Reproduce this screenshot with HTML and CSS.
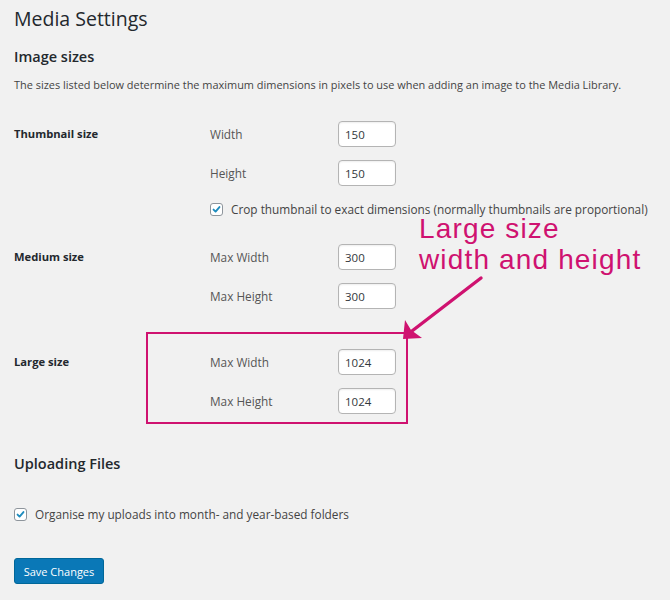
FILE: index.html
```html
<!DOCTYPE html>
<html lang="en">
<head>
<meta charset="utf-8">
<title>Media Settings</title>
<link rel="stylesheet" href="styles.css">
</head>
<body>
<div class="wrap">
  <h1 class="page-title">Media Settings</h1>
  <h2 class="section-title">Image sizes</h2>
  <p class="desc">The sizes listed below determine the maximum dimensions in pixels to use when adding an image to the Media Library.</p>

  <div class="setting setting-thumb">
    <div class="th">Thumbnail size</div>
    <div class="td">
      <div class="field"><label class="field-label">Width</label><input class="num" type="text" value="150"></div>
      <div class="field"><label class="field-label">Height</label><input class="num" type="text" value="150"></div>
      <div class="check-row check-row-crop">
        <span class="cb"><svg viewBox="0 0 13 13" width="13" height="13"><path d="M3 6.6 L5.4 9 L10 3.6" fill="none" stroke="#1e8cbe" stroke-width="2.2" stroke-linecap="round" stroke-linejoin="round"/></svg></span>
        <span class="check-text">Crop thumbnail to exact dimensions (normally thumbnails are proportional)</span>
      </div>
    </div>
  </div>

  <div class="setting setting-medium">
    <div class="th">Medium size</div>
    <div class="td">
      <div class="field"><label class="field-label">Max Width</label><input class="num" type="text" value="300"></div>
      <div class="field"><label class="field-label">Max Height</label><input class="num" type="text" value="300"></div>
    </div>
  </div>

  <div class="setting setting-large">
    <div class="th">Large size</div>
    <div class="td">
      <div class="field"><label class="field-label">Max Width</label><input class="num" type="text" value="1024"></div>
      <div class="field"><label class="field-label">Max Height</label><input class="num" type="text" value="1024"></div>
    </div>
  </div>

  <h2 class="section-title section-upload">Uploading Files</h2>
  <div class="check-row check-row-upload">
    <span class="cb"><svg viewBox="0 0 13 13" width="13" height="13"><path d="M3 6.6 L5.4 9 L10 3.6" fill="none" stroke="#1e8cbe" stroke-width="2.2" stroke-linecap="round" stroke-linejoin="round"/></svg></span>
    <span class="check-text">Organise my uploads into month- and year-based folders</span>
  </div>

  <div class="submit-row"><button class="btn-primary" type="button">Save Changes</button></div>

  <div class="annot-box"></div>
  <div class="annot-text">Large size<br>width and height</div>
  <svg class="annot-arrow" width="670" height="600" viewBox="0 0 670 600">
    <line x1="481" y1="278" x2="412" y2="331" stroke="#cf1270" stroke-width="3.4" stroke-linecap="round"/>
    <polygon points="403,339 405,320 411,330 422,338" fill="#cf1270"/>
  </svg>
</div>
</body>
</html>
```

FILE: styles.css
```css
html, body {
  margin: 0;
  padding: 0;
  background: #f1f1f1;
}
body {
  font-family: "Open Sans", "Noto Sans", sans-serif;
  color: #444;
  font-size: 11px;
}
.wrap {
  position: relative;
  width: 670px;
  height: 600px;
  padding: 0 14px;
  box-sizing: border-box;
  overflow: hidden;
}
.page-title {
  margin: 0;
  padding-top: 6px;
  font-size: 19.5px;
  line-height: 26px;
  font-weight: 400;
  color: #23282d;
}
.section-title {
  margin: 15px 0 0;
  font-size: 14.5px;
  line-height: 20px;
  font-weight: 600;
  color: #23282d;
}
.section-upload { margin-top: 40px; }
.desc {
  margin: 10px 0 0;
  font-size: 10.95px;
  line-height: 16px;
  color: #444;
}
.setting {
  display: grid;
  grid-template-columns: 196px 1fr;
}
.setting-thumb { margin-top: 28px; }
.setting-medium { margin-top: 26px; }
.setting-large { margin-top: 40px; }
.th {
  font-weight: 700;
  color: #23282d;
  line-height: 26px;
  font-size: 11.2px;
}
.td {
  display: flex;
  flex-direction: column;
  gap: 13px;
}
.field {
  display: grid;
  grid-template-columns: 128px 58px;
  align-items: center;
  height: 26px;
}
.field-label {
  color: #555;
  font-size: 11.8px;
}
.num {
  width: 58px;
  height: 26px;
  box-sizing: border-box;
  margin: 0;
  border: 1px solid #b4b4b4;
  border-radius: 4px;
  background: #fff;
  padding: 0 0 0 6px;
  font-family: "Open Sans", "Noto Sans", sans-serif;
  font-size: 11.5px;
  color: #32373c;
  box-shadow: inset 0 1px 2px rgba(0,0,0,0.07);
  outline: none;
}
.check-row {
  display: flex;
  align-items: center;
  height: 18px;
  gap: 8px;
  color: #444;
  font-size: 11.8px;
}
.check-row-crop { margin-top: 1px; }
.check-row-upload { margin-top: 31px; }
.cb {
  width: 13px;
  height: 13px;
  box-sizing: border-box;
  border: 1px solid #8e959c;
  border-radius: 3px;
  background: #fff;
  display: flex;
  align-items: center;
  justify-content: center;
  flex: none;
}
.cb svg { display: block; }
.submit-row { margin-top: 35px; }
.btn-primary {
  height: 26px;
  width: 90px;
  padding: 0;
  margin: 0;
  border: 1px solid #006799;
  border-radius: 3px;
  background: #0a78b7;
  color: #fff;
  font-family: "Open Sans", "Noto Sans", sans-serif;
  font-size: 11px;
  cursor: pointer;
}
.annot-box {
  position: absolute;
  left: 146px;
  top: 332px;
  width: 262px;
  height: 92px;
  box-sizing: border-box;
  border: 2.5px solid #cf1270;
}
.annot-text {
  position: absolute;
  left: 419px;
  top: 213px;
  font-family: "Liberation Sans", Arial, sans-serif;
  font-size: 28px;
  line-height: 31px;
  letter-spacing: 1.15px;
  color: #cf1270;
  white-space: nowrap;
}
.annot-arrow {
  position: absolute;
  left: 0;
  top: 0;
  pointer-events: none;
}
```
